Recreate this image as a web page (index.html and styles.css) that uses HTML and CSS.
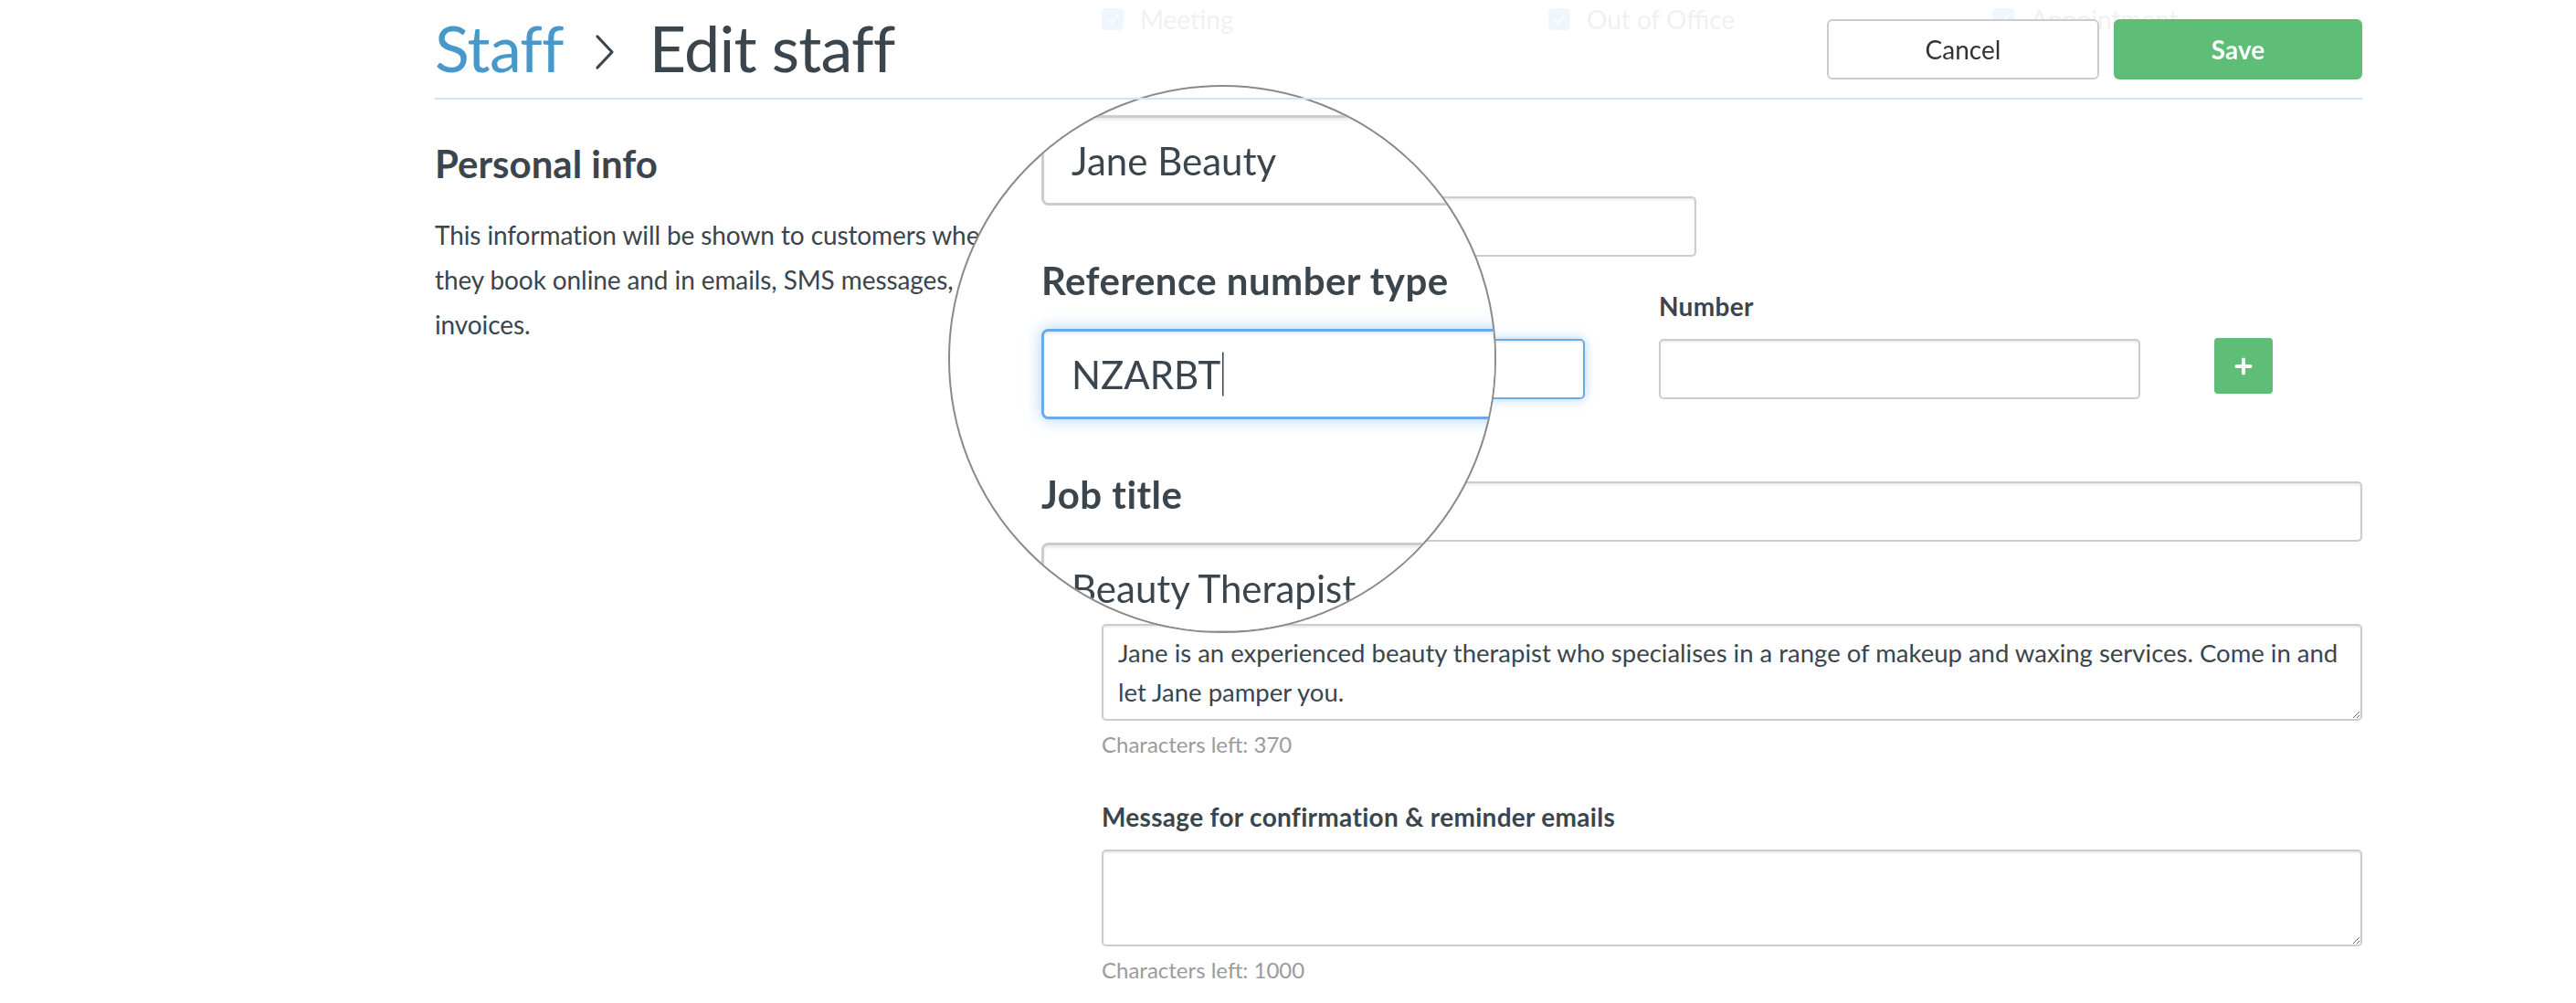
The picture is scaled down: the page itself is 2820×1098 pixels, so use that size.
FILE: index.html
```html
<!DOCTYPE html>
<html lang="en">
<head>
    <meta charset="UTF-8">
    <meta name="viewport" content="width=device-width, initial-scale=1.0">
    <title>Edit staff</title>
    <link rel="stylesheet" href="styles.css">
</head>
<body>
    <div class="layout">
        <aside class="sidebar"></aside>

        <main class="main">
            <!-- Calendar section, scrolled up under the header -->
            <section class="section section-calendar">
                <div class="section-side"></div>
                <div class="form-col">
                    <div class="check-row">
                        <label class="check">
                            <svg class="check-box" viewBox="0 0 24 24"><rect width="24" height="24" rx="4" fill="#3d8fe0"/><path d="M6.5 12.5l3.8 4 7.2-8.5" fill="none" stroke="#fff" stroke-width="1.6" stroke-linecap="round" stroke-linejoin="round"/></svg>
                            Meeting
                        </label>
                        <label class="check">
                            <svg class="check-box" viewBox="0 0 24 24"><rect width="24" height="24" rx="4" fill="#3d8fe0"/><path d="M6.5 12.5l3.8 4 7.2-8.5" fill="none" stroke="#fff" stroke-width="1.6" stroke-linecap="round" stroke-linejoin="round"/></svg>
                            Out of Office
                        </label>
                        <label class="check">
                            <svg class="check-box" viewBox="0 0 24 24"><rect width="24" height="24" rx="4" fill="#3d8fe0"/><path d="M6.5 12.5l3.8 4 7.2-8.5" fill="none" stroke="#fff" stroke-width="1.6" stroke-linecap="round" stroke-linejoin="round"/></svg>
                            Appointment
                        </label>
                    </div>
                </div>
            </section>

            <!-- Personal info -->
            <section class="section section-personal">
                <div class="section-side">
                    <h2>Personal info</h2>
                    <p>This information will be shown to customers when they book online and in emails, SMS messages, and invoices.</p>
                </div>
                <div class="form-col">
                    <div class="form-group">
                        <label>Display name</label>
                        <input class="field field-half" type="text" value="Jane Beauty">
                    </div>
                    <div class="form-group ref-row">
                        <div>
                            <label>Reference number type</label>
                            <input class="field focused" type="text" value="NZARBT">
                        </div>
                        <div>
                            <label>Number</label>
                            <input class="field" type="text">
                        </div>
                        <button class="btn-add">
                            <svg viewBox="0 0 20 20"><path d="M10 2.5v15M2.5 10h15" stroke="#fff" stroke-width="4" stroke-linecap="round"/></svg>
                        </button>
                    </div>
                    <div class="form-group">
                        <label>Job title</label>
                        <input class="field" type="text" value="Beauty Therapist">
                    </div>
                    <div class="form-group">
                        <label>Description</label>
                        <textarea class="field field-area">Jane is an experienced beauty therapist who specialises in a range of makeup and waxing services. Come in and let Jane pamper you.</textarea>
                        <div class="help">Characters left: 370</div>
                    </div>
                    <div class="form-group">
                        <label>Message for confirmation &amp; reminder emails</label>
                        <textarea class="field field-area"></textarea>
                        <div class="help">Characters left: 1000</div>
                    </div>
                </div>
            </section>
        </main>
    </div>

    <!-- Sticky header -->
    <div class="topbar-shade"></div>
    <header class="topbar">
        <div class="topbar-inner">
            <h1 class="crumbs">
                <a class="crumb-link" href="#">Staff</a>
                <svg class="crumb-sep" viewBox="0 0 22 40"><polyline points="3,3 19,20 3,37" fill="none" stroke="#3b454d" stroke-width="3.2" stroke-linecap="round" stroke-linejoin="round"/></svg>
                <span>Edit staff</span>
            </h1>
            <div class="actions">
                <button class="btn btn-cancel">Cancel</button>
                <button class="btn btn-save">Save</button>
            </div>
        </div>
    </header>

    <!-- Magnifying glass over the form -->
    <div class="lens">
        <div class="form-col lens-view">
            <div class="form-group">
                <div class="label">Display name</div>
                <div class="field field-half">Jane Beauty</div>
            </div>
            <div class="form-group ref-row">
                <div>
                    <div class="label">Reference number type</div>
                    <div class="field focused">NZARBT<span class="caret"></span></div>
                </div>
                <div>
                    <div class="label">Number</div>
                    <div class="field"></div>
                </div>
            </div>
            <div class="form-group">
                <div class="label">Job title</div>
                <div class="field">Beauty Therapist</div>
            </div>
        </div>
    </div>
</body>
</html>
```

FILE: styles.css
```css
body {
    margin: 0;
    font-family: Lato, "Open Sans", sans-serif;
    color: #3b454d;
    background: #fff;
    overflow: hidden;
}

.layout {
    display: flex;
}

.sidebar {
    width: 242px;
    flex-shrink: 0;
}

.main {
    flex: 1;
    padding: 0 234px;
}

.section {
    display: grid;
    grid-template-columns: 640px 1fr;
    column-gap: 90px;
}

.section-calendar {
    padding-top: 9px;
}

.section-personal {
    margin-top: 121px;
}

.section-side h2 {
    margin: 0;
    font-size: 42px;
    line-height: 50px;
    font-weight: 700;
}

.section-side p {
    margin: 29px 0 0;
    font-size: 28px;
    line-height: 49px;
    letter-spacing: -0.1px;
}

/* checkbox row */
.check-row {
    display: grid;
    grid-template-columns: 489px 486px 1fr;
    height: 24px;
}

.check {
    display: flex;
    align-items: center;
    gap: 18px;
    font-size: 28px;
    line-height: 24px;
}

.check-box {
    width: 24px;
    height: 24px;
}

/* form */
.section-personal .form-col {
    padding-top: 7px;
}

.form-group {
    margin-bottom: 36px;
}

.form-group label,
.form-group .label {
    display: block;
    font-size: 28px;
    line-height: 36px;
    font-weight: 700;
    letter-spacing: 0.3px;
    margin-bottom: 18px;
    white-space: nowrap;
}

.field {
    display: block;
    box-sizing: border-box;
    width: 100%;
    height: 66px;
    margin: 0;
    padding: 0 20px;
    border: 2px solid #cccccc;
    border-radius: 5px;
    background: #fff;
    box-shadow: inset 0 2px 2px rgba(0, 0, 0, 0.075);
    font-family: Lato, "Open Sans", sans-serif;
    font-size: 28px;
    color: #3b454d;
    outline: none;
}

.field-half {
    width: 651px;
}

.field.focused {
    border-color: #6aaae6;
    box-shadow: inset 0 2px 2px rgba(0, 0, 0, 0.075), 0 0 12px rgba(102, 175, 233, 0.55);
}

.field-area {
    height: 106px;
    padding: 8px 16px;
    font-size: 27.5px;
    line-height: 43px;
}

.help {
    margin-top: 10px;
    padding-bottom: 9px;
    font-size: 24px;
    line-height: 32px;
    color: #9b9b9b;
}

.ref-row {
    display: grid;
    grid-template-columns: 529px 527px 64px;
    column-gap: 81px;
}

.btn-add {
    margin-top: 53px;
    width: 64px;
    height: 61px;
    padding: 0;
    border: none;
    border-radius: 4px;
    background: #5ebe78;
    display: flex;
    align-items: center;
    justify-content: center;
    cursor: pointer;
}

.btn-add svg {
    width: 20px;
    height: 20px;
}

/* header */
.topbar-shade {
    position: fixed;
    top: 0;
    left: 0;
    right: 0;
    height: 109px;
    background: rgba(255, 255, 255, 0.92);
    z-index: 1;
}

.topbar {
    position: fixed;
    top: 0;
    left: 242px;
    right: 0;
    padding: 0 234px;
    z-index: 3;
}

.topbar-inner {
    height: 107px;
    border-bottom: 2px solid #cbe6fb;
    display: flex;
    align-items: center;
    justify-content: space-between;
}

.crumbs {
    display: flex;
    align-items: center;
    margin: 0 0 3px;
    font-size: 70px;
    line-height: 86px;
    font-weight: 400;
    letter-spacing: -0.8px;
    color: #3b454d;
}

.crumb-link {
    color: #4899c9;
    text-decoration: none;
}

.crumb-sep {
    width: 22px;
    height: 40px;
    margin: 10px 38px 0 34px;
}

.actions {
    display: flex;
    gap: 16px;
}

.btn {
    height: 66px;
    box-sizing: border-box;
    border-radius: 6px;
    font-family: Lato, "Open Sans", sans-serif;
    font-size: 28px;
    cursor: pointer;
}

.btn-cancel {
    width: 298px;
    background: #fff;
    border: 2px solid #cccccc;
    color: #333;
}

.btn-save {
    width: 272px;
    background: #5ebe78;
    border: 2px solid #5ebe78;
    color: #fff;
    font-weight: 700;
}

/* magnifier */
.lens {
    position: absolute;
    left: 1038px;
    top: 93px;
    width: 600px;
    height: 600px;
    box-sizing: border-box;
    border: 2px solid #8a8a8a;
    border-radius: 50%;
    background: #fff;
    overflow: hidden;
    z-index: 2;
}

.lens-view {
    position: absolute;
    left: 166px;
    top: 66px;
    width: 1380px;
    transform: scale(1.5);
    transform-origin: 132px 232px;
}

.lens-view .field {
    display: flex;
    align-items: center;
}

.caret {
    display: inline-block;
    width: 1px;
    height: 32px;
    margin-left: 1px;
    background: #3b454d;
}
```
